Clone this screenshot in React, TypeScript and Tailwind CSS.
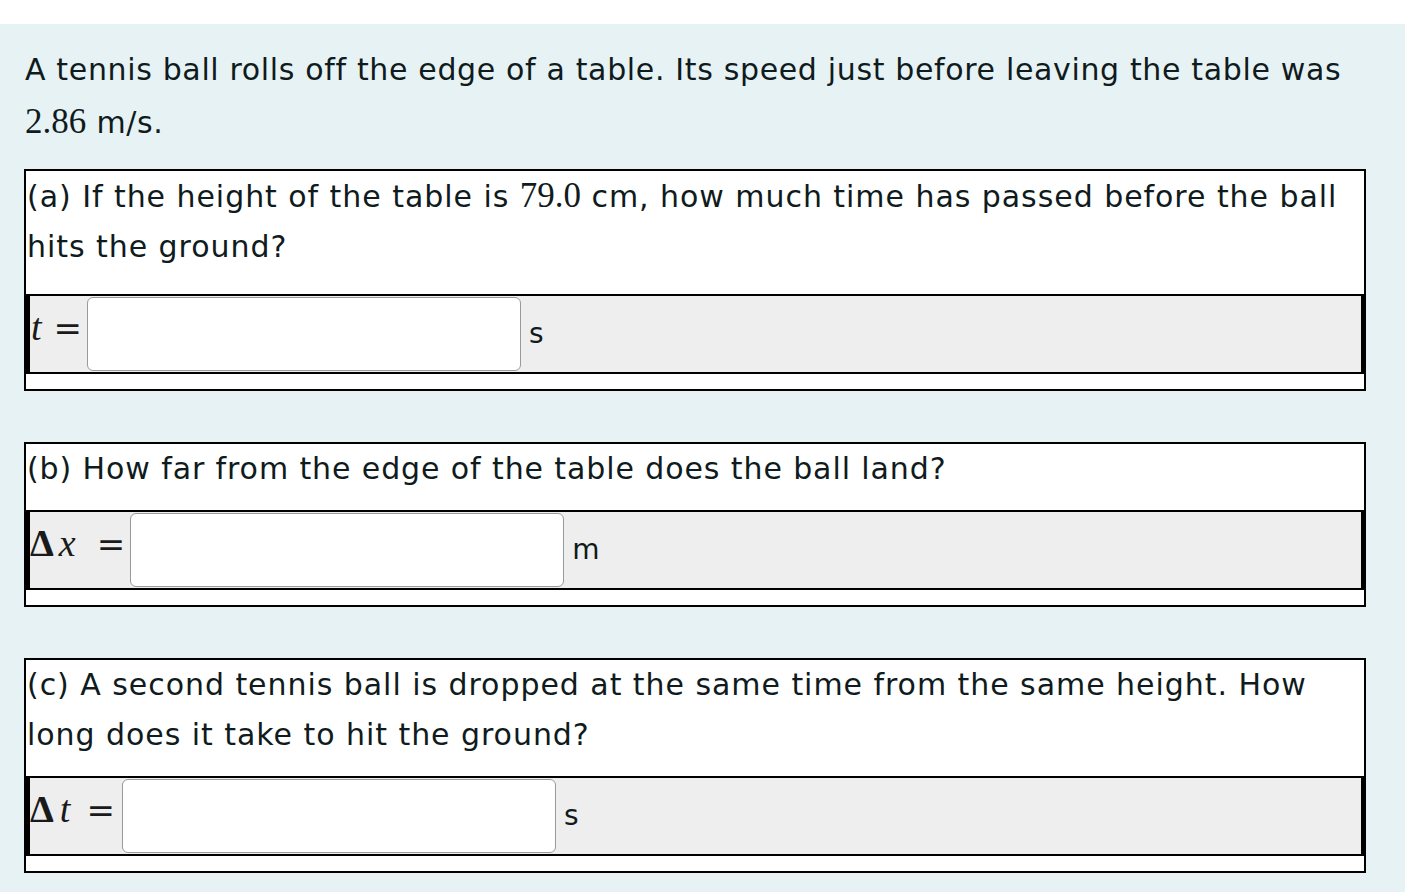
import React from "react";

const sans = { fontFamily: "'DejaVu Sans', 'Noto Sans', sans-serif" };

function MathIt({ children, className = "" }: { children: React.ReactNode; className?: string }) {
  return <span className={`font-['Liberation_Serif',serif] italic ${className}`}>{children}</span>;
}

function MathRm({ children }: { children: React.ReactNode }) {
  return <span className="font-['Liberation_Serif',serif] text-[35px] tracking-normal">{children}</span>;
}

function Delta() {
  return <span className="font-['Liberation_Serif',serif] font-bold">Δ</span>;
}

function Eq({ className = "" }: { className?: string }) {
  return <span className={`font-['DejaVu_Serif',serif] text-[34px] ${className}`}>=</span>;
}

function AnswerRow({
  label,
  unit,
  gap,
}: {
  label: React.ReactNode;
  unit: string;
  gap: string;
}) {
  return (
    <div className="mb-[15px] flex h-[80px] items-center border-2 border-l-4 border-r-[3px] border-black bg-[#eeeeee]">
      <div className="flex items-baseline pb-[14px] text-[38px] leading-none text-[#1a1a1a]">{label}</div>
      <input
        type="text"
        className={`h-[74px] w-[434px] rounded-md border-[1.5px] border-[#9a9a9a] bg-white ${gap}`}
      />
      <span className="ml-[8px] text-[28px] tracking-[0.5px]">{unit}</span>
    </div>
  );
}

export default function App() {
  return (
    <div className="min-h-screen bg-white pt-6 text-[#0f1b1d]" style={sans}>
      <div className="w-[1405px] bg-[#e7f2f4] pb-6 pl-6 pr-[39px] pt-5">
        <p className="pl-px text-[30px] leading-[52px] tracking-[0.65px]">
          A tennis ball rolls off the edge of a table. Its speed just before leaving the table was
          <br />
          <MathRm>2.86</MathRm> m/s.
        </p>

        {/* part a */}
        <div className="mt-5 border-2 border-black bg-white">
          <p className="pb-[22px] pl-px text-[30px] leading-[50px] tracking-[0.95px]">
            (a) If the height of the table is <MathRm>79.0</MathRm> cm, how much time has passed before the ball
            <br />
            hits the ground?
          </p>
          <AnswerRow
            label={
              <>
                <MathIt className="ml-[1px]">t</MathIt>
                <Eq className="ml-[12px]" />
              </>
            }
            gap="ml-[5px]"
            unit="s"
          />
        </div>

        {/* part b */}
        <div className="mt-[51px] border-2 border-black bg-white">
          <p className="pb-4 pl-px text-[30px] leading-[50px] tracking-[0.9px]">
            (b) How far from the edge of the table does the ball land?
          </p>
          <AnswerRow
            label={
              <>
                <Delta />
                <MathIt className="ml-[5px]">x</MathIt>
                <Eq className="ml-[21px]" />
              </>
            }
            gap="ml-[5px]"
            unit="m"
          />
        </div>

        {/* part c */}
        <div className="mt-[51px] border-2 border-black bg-white">
          <p className="pb-4 pl-px text-[30px] leading-[50px] tracking-[0.95px]">
            (c) A second tennis ball is dropped at the same time from the same height. How
            <br />
            long does it take to hit the ground?
          </p>
          <AnswerRow
            label={
              <>
                <Delta />
                <MathIt className="ml-[6px]">t</MathIt>
                <Eq className="ml-[16px]" />
              </>
            }
            gap="ml-[7px]"
            unit="s"
          />
        </div>
      </div>
    </div>
  );
}
